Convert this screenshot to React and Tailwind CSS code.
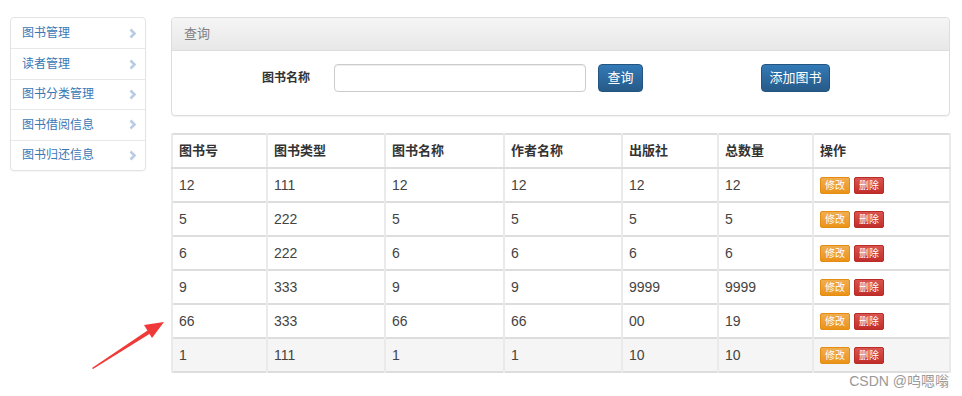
import React from 'react';

const menu = ['图书管理', '读者管理', '图书分类管理', '图书借阅信息', '图书归还信息'];

const books = [
  { id: '12', type: '111', name: '12', author: '12', press: '12', total: '12' },
  { id: '5', type: '222', name: '5', author: '5', press: '5', total: '5' },
  { id: '6', type: '222', name: '6', author: '6', press: '6', total: '6' },
  { id: '9', type: '333', name: '9', author: '9', press: '9999', total: '9999' },
  { id: '66', type: '333', name: '66', author: '66', press: '00', total: '19' },
  { id: '1', type: '111', name: '1', author: '1', press: '10', total: '10' },
];

const cols = [
  { title: '图书号', w: 'w-[95px]' },
  { title: '图书类型', w: 'w-[118px]' },
  { title: '图书名称', w: 'w-[119px]' },
  { title: '作者名称', w: 'w-[118px]' },
  { title: '出版社', w: 'w-[96px]' },
  { title: '总数量', w: 'w-[95px]' },
  { title: '操作', w: 'w-[137px]' },
];

const Chevron = () => (
  <svg width="8" height="11" viewBox="0 0 8 11" className="shrink-0">
    <path d="M1.5 1.5 L5.5 5.5 L1.5 9.5" fill="none" stroke="#b9cde2" strokeWidth="2.6" />
  </svg>
);

const App = () => {
  return (
    <div className="relative w-[962px] h-[396px] bg-white overflow-hidden font-['Liberation_Sans','Noto_Sans_CJK_SC',sans-serif] text-[#333]">
      <div className="flex items-start pt-[17px] pl-[10px]">
        {/* Sidebar */}
        <div className="w-[136px] rounded-[4px] border border-[#e3e3e3] bg-white shadow-[0_1px_1px_rgba(0,0,0,0.04)]">
          {menu.map((item, i) => (
            <div
              key={item}
              className={`flex items-center justify-between h-[30.4px] pl-[11px] pr-[8px] text-[12px] text-[#3a78b5] ${i > 0 ? 'border-t border-[#e8e8e8]' : ''}`}
            >
              <span>{item}</span>
              <Chevron />
            </div>
          ))}
        </div>

        {/* Main */}
        <div className="ml-[25px] w-[779px]">
          {/* Query panel */}
          <div className="rounded-[4px] border border-[#dddddd] bg-white shadow-[0_1px_1px_rgba(0,0,0,0.05)]">
            <div className="h-[33px] flex items-center pl-[12px] bg-gradient-to-b from-[#f5f5f5] to-[#e8e8e8] border-b border-[#dddddd] rounded-t-[4px] text-[13px] text-[#808080]">
              查询
            </div>
            <div className="flex items-center pt-[13px] pb-[23px]">
              <div className="w-[138px] text-right text-[12px] font-bold text-[#333]">图书名称</div>
              <input className="ml-[24px] w-[252px] h-[28px] rounded-[4px] border border-[#cccccc] shadow-[inset_0_1px_1px_rgba(0,0,0,0.075)] outline-none" />
              <button className="ml-[12px] w-[45px] h-[28px] rounded-[4px] border border-[#245580] bg-gradient-to-b from-[#337ab7] to-[#265a88] text-white text-[13px]">
                查询
              </button>
              <button className="ml-[118px] w-[69px] h-[28px] rounded-[4px] border border-[#245580] bg-gradient-to-b from-[#337ab7] to-[#265a88] text-white text-[13px]">
                添加图书
              </button>
            </div>
          </div>

          {/* Books table */}
          <table className="mt-[17px] w-[779px] table-fixed border-collapse border-2 border-[#dddddd]">
            <colgroup>
              {cols.map((c) => (
                <col key={c.title} className={c.w} />
              ))}
            </colgroup>
            <thead>
              <tr className="h-[34px]">
                {cols.map((c) => (
                  <th key={c.title} className="text-left text-[13px] font-bold pl-[6px] border-x-2 border-x-[#eaeaea] border-b-2 border-b-[#dddddd]">
                    {c.title}
                  </th>
                ))}
              </tr>
            </thead>
            <tbody>
              {books.map((b, i) => (
                <tr key={b.id} className={`h-[34px] ${i === books.length - 1 ? 'bg-[#f5f5f5]' : ''}`}>
                  {[b.id, b.type, b.name, b.author, b.press, b.total].map((v, j) => (
                    <td key={j} className="pl-[6px] text-[14px] text-[#444] border-x-2 border-x-[#eaeaea] border-t-2 border-t-[#dddddd]">
                      {v}
                    </td>
                  ))}
                  <td className="pl-[6px] border-x-2 border-x-[#eaeaea] border-t-2 border-t-[#dddddd]">
                    <div className="flex gap-[4px]">
                      <span className="inline-flex items-center justify-center w-[30px] h-[17px] rounded-[2px] border border-[#e38d13] bg-gradient-to-b from-[#f0ad4e] to-[#eb9316] text-white text-[10px]">
                        修改
                      </span>
                      <span className="inline-flex items-center justify-center w-[30px] h-[17px] rounded-[2px] border border-[#b92c28] bg-gradient-to-b from-[#d9534f] to-[#c12e2a] text-white text-[10px]">
                        删除
                      </span>
                    </div>
                  </td>
                </tr>
              ))}
            </tbody>
          </table>
        </div>
      </div>

      {/* Annotation arrow */}
      <svg className="absolute left-0 top-0" width="962" height="396" viewBox="0 0 962 396">
        <polygon points="92,368 149,329.5 151,333 93,369" fill="#f03a3a" />
        <polygon points="164,322 144,325 152,338" fill="#f03a3a" />
      </svg>

      <div className="absolute right-[13px] top-[371px] text-[14px] text-[#999]">
        CSDN @呜嗯嗡
      </div>
    </div>
  );
};

export default App;
